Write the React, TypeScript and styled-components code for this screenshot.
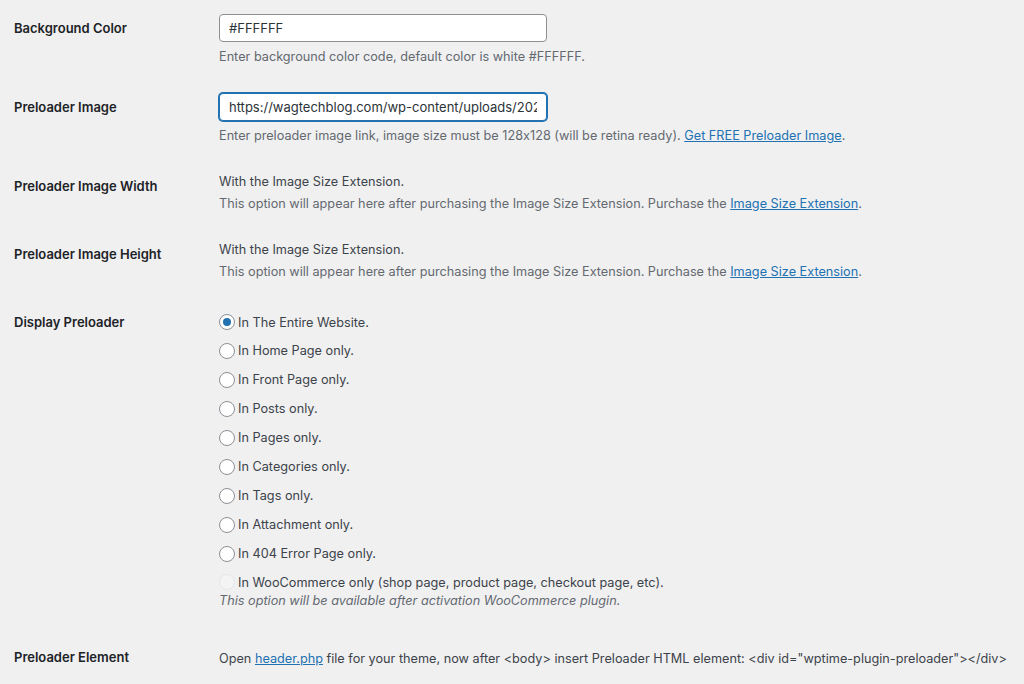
import React from "react";
import styled, { createGlobalStyle } from "styled-components";

const Global = createGlobalStyle`
  html, body { margin: 0; padding: 0; background: #f0f0f1; }
  body {
    font-family: Inter, "Liberation Sans", Arial, sans-serif;
    font-feature-settings: "calt" 0;
    color: #3c434a;
    font-size: 12.7px;
  }
`;

const Page = styled.div`
  width: 1024px;
  height: 684px;
  overflow: hidden;
  padding-left: 14px;
  box-sizing: border-box;
`;

const Row = styled.div<{ $pb?: number }>`
  display: flex;
  padding-bottom: ${(p) => p.$pb ?? 12}px;
`;

const Label = styled.div<{ $pt?: number }>`
  width: 205px;
  flex: none;
  padding-top: ${(p) => p.$pt ?? 19}px;
  font-size: 13px;
  font-weight: 600;
  line-height: 18px;
  color: #1d2327;
`;

const Field = styled.div<{ $pt?: number }>`
  padding-top: ${(p) => p.$pt ?? 14}px;
  display: flex;
  flex-direction: column;
  align-items: flex-start;
`;

const Input = styled.input<{ $focus?: boolean }>`
  box-sizing: border-box;
  width: 328px;
  height: 28px;
  margin: 0;
  padding: 0 9px;
  font-family: Inter, "Liberation Sans", Arial, sans-serif;
  font-size: 13px;
  color: #2c3338;
  background: #fff;
  border: 1px solid ${(p) => (p.$focus ? "#2271b1" : "#8c8f94")};
  box-shadow: ${(p) => (p.$focus ? "0 0 0 1px #2271b1" : "none")};
  border-radius: 4px;
  outline: none;
`;

const Desc = styled.p<{ $mt?: number; $italic?: boolean }>`
  margin: ${(p) => p.$mt ?? 5}px 0 0;
  font-size: 12.7px;
  line-height: 20px;
  color: #646970;
  font-style: ${(p) => (p.$italic ? "italic" : "normal")};
`;

const Text = styled.div`
  font-size: 12.7px;
  line-height: 20px;
  color: #3c434a;
  white-space: nowrap;
`;

const Link = styled.a`
  color: #2271b1;
  text-decoration: underline;
`;

const RadioList = styled.div`
  display: flex;
  flex-direction: column;
`;

const RadioItem = styled.label<{ $last?: boolean }>`
  display: flex;
  align-items: center;
  height: 20px;
  margin-bottom: ${(p) => (p.$last ? 0 : 8.95)}px;
  font-size: 12.7px;
  color: #3c434a;
`;

const Circle = styled.span<{ $checked?: boolean; $disabled?: boolean }>`
  box-sizing: border-box;
  width: 16px;
  height: 16px;
  border-radius: 50%;
  flex: none;
  margin-right: 3px;
  border: 1px solid ${(p) => (p.$disabled ? "#e6e6e8" : "#8c8f94")};
  background: ${(p) => (p.$disabled ? "#f4f4f5" : "#fff")};
  display: flex;
  align-items: center;
  justify-content: center;
  &::after {
    content: "";
    display: ${(p) => (p.$checked ? "block" : "none")};
    width: 8px;
    height: 8px;
    border-radius: 50%;
    background: #2271b1;
  }
`;

const options = [
  "In The Entire Website.",
  "In Home Page only.",
  "In Front Page only.",
  "In Posts only.",
  "In Pages only.",
  "In Categories only.",
  "In Tags only.",
  "In Attachment only.",
  "In 404 Error Page only.",
  "In WooCommerce only (shop page, product page, checkout page, etc).",
];

export default function App() {
  return (
    <Page>
      <Global />
      <Row>
        <Label>Background Color</Label>
        <Field>
          <Input defaultValue="#FFFFFF" />
          <Desc>Enter background color code, default color is white #FFFFFF.</Desc>
        </Field>
      </Row>
      <Row>
        <Label>Preloader Image</Label>
        <Field>
          <Input $focus defaultValue="https://wagtechblog.com/wp-content/uploads/2020/05/preloader.gif" />
          <Desc>
            Enter preloader image link, image size must be 128x128 (will be retina ready).{" "}
            <Link href="#">Get FREE Preloader Image</Link>.
          </Desc>
        </Field>
      </Row>
      <Row>
        <Label>Preloader Image Width</Label>
        <Field>
          <Text>With the Image Size Extension.</Text>
          <Desc $mt={2}>
            This option will appear here after purchasing the Image Size Extension. Purchase the{" "}
            <Link href="#">Image Size Extension</Link>.
          </Desc>
        </Field>
      </Row>
      <Row>
        <Label>Preloader Image Height</Label>
        <Field>
          <Text>With the Image Size Extension.</Text>
          <Desc $mt={2}>
            This option will appear here after purchasing the Image Size Extension. Purchase the{" "}
            <Link href="#">Image Size Extension</Link>.
          </Desc>
        </Field>
      </Row>
      <Row $pb={18}>
        <Label>Display Preloader</Label>
        <Field $pt={18}>
          <RadioList>
            {options.map((o, i) => (
              <RadioItem key={o} $last={i === options.length - 1}>
                <Circle $checked={i === 0} $disabled={i === options.length - 1} />
                {o}
              </RadioItem>
            ))}
          </RadioList>
          <Desc $mt={-1} $italic>
            This option will be available after activation WooCommerce plugin.
          </Desc>
        </Field>
      </Row>
      <Row>
        <Label $pt={19}>Preloader Element</Label>
        <Field $pt={20}>
          <Text>
            Open <Link href="#">header.php</Link> file for your theme, now after &lt;body&gt; insert Preloader HTML
            element: &lt;div id="wptime-plugin-preloader"&gt;&lt;/div&gt;
          </Text>
        </Field>
      </Row>
    </Page>
  );
}
